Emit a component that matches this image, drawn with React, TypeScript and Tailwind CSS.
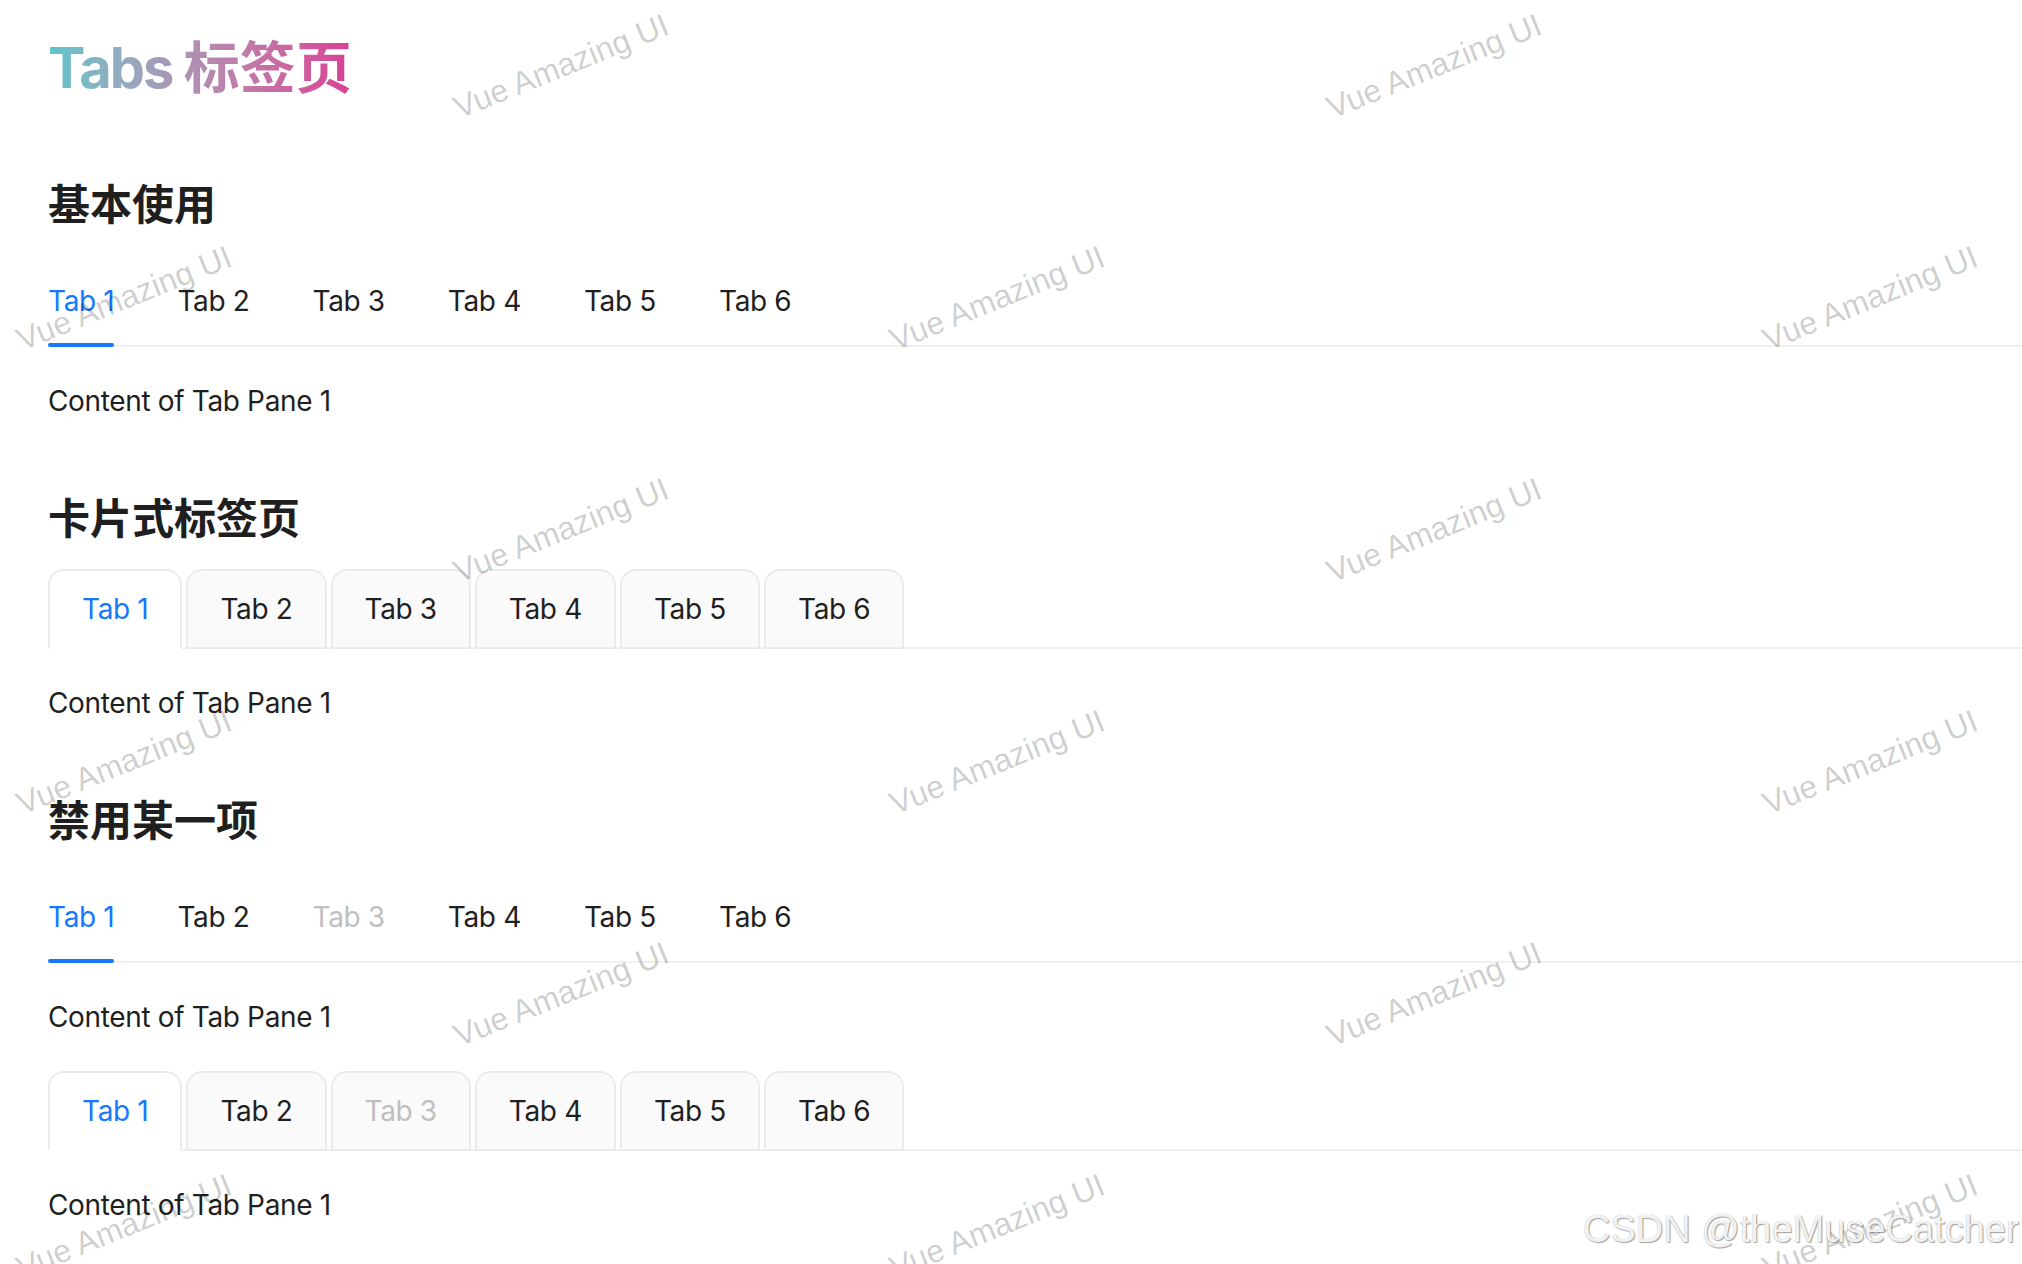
import React from "react";
import clsx from "clsx";

const tabs = ["Tab 1", "Tab 2", "Tab 3", "Tab 4", "Tab 5", "Tab 6"];

/** Grid of watermark centres: rows alternate between two column offsets. */
function watermarkPoints() {
  const points: { x: number; y: number }[] = [];
  for (let row = 0; row < 6; row++) {
    const y = 66 + row * 232;
    const cols = row % 2 === 0 ? [561, 1434] : [124, 997, 1870];
    for (const x of cols) points.push({ x, y });
  }
  return points;
}

function LineTabs({ disabled }: { disabled?: number }) {
  return (
    <div className="mt-[32px] flex gap-[63px] border-b-2 border-[#f0f0f0]">
      {tabs.map((tab, i) => (
        <div
          key={tab}
          className={clsx(
            "relative -mb-[2px] py-[24px] text-[28px] leading-[44px] tracking-[-0.35px]",
            i === 0
              ? "text-[#1677ff]"
              : i === disabled
                ? "text-[#bfbfbf]"
                : "text-[#1f1f1f]"
          )}
        >
          {tab}
          {i === 0 && (
            <span className="absolute bottom-0 left-0 right-0 h-[4px] rounded-full bg-[#1677ff]" />
          )}
        </div>
      ))}
    </div>
  );
}

function CardTabs({ disabled }: { disabled?: number }) {
  return (
    <div className="mt-[32px] flex gap-[4px] border-b-2 border-[#f0f0f0]">
      {tabs.map((tab, i) => (
        <div
          key={tab}
          className={clsx(
            "-mb-[2px] rounded-t-[16px] border-2 border-[#ebebeb] px-[32px] py-[16px] text-[28px] leading-[44px] tracking-[-0.35px]",
            i === 0
              ? "border-b-white bg-white text-[#1677ff]"
              : i === disabled
                ? "bg-[#fafafa] text-[#bfbfbf]"
                : "bg-[#fafafa] text-[#1f1f1f]"
          )}
        >
          {tab}
        </div>
      ))}
    </div>
  );
}

function Pane() {
  return (
    <p className="mt-[32px] text-[28px] leading-[44px] tracking-[-0.35px] text-[#1f1f1f]">
      Content of Tab Pane 1
    </p>
  );
}

function Heading({ children, className }: { children: React.ReactNode; className?: string }) {
  return (
    <h2
      className={clsx(
        "text-[42px] font-bold leading-[42px] text-[#1f1f1f] [font-family:'Noto_Sans_CJK_SC',sans-serif]",
        className
      )}
    >
      {children}
    </h2>
  );
}

export default function App() {
  return (
    <div className="relative min-h-[1264px] overflow-hidden bg-white [font-family:Inter,'Noto_Sans_CJK_SC',sans-serif]">
      <main className="pl-[48px] pt-[40px]">
        <h1 className="w-fit bg-gradient-to-r from-[#5ec4cc] to-[#d83e95] bg-clip-text text-[56px] font-bold leading-[56px] text-transparent">
          <span className="tracking-[-2px]">Tabs </span>标签页
        </h1>

        <Heading className="mt-[85px]">基本使用</Heading>
        <LineTabs />
        <Pane />

        <Heading className="mt-[72px]">卡片式标签页</Heading>
        <CardTabs />
        <Pane />

        <Heading className="mt-[72px]">禁用某一项</Heading>
        <LineTabs disabled={2} />
        <Pane />
        <CardTabs disabled={2} />
        <Pane />
      </main>

      <div className="pointer-events-none absolute inset-0">
        {watermarkPoints().map((p) => (
          <span
            key={`${p.x}-${p.y}`}
            className="absolute -translate-x-1/2 -translate-y-1/2 -rotate-[22deg] whitespace-nowrap text-[32px] leading-none text-black/20 [font-family:'Liberation_Sans',Arial,sans-serif]"
            style={{ left: p.x, top: p.y }}
          >
            Vue Amazing UI
          </span>
        ))}
      </div>

      <span className="pointer-events-none absolute left-[1583px] top-[1210px] whitespace-nowrap text-[38px] leading-[38px] text-white/90 [font-family:'Liberation_Sans',Arial,sans-serif] [text-shadow:1px_1px_1px_rgba(0,0,0,0.35),0_0_1px_rgba(0,0,0,0.35)]">
        CSDN @theMuseCatcher
      </span>
    </div>
  );
}
